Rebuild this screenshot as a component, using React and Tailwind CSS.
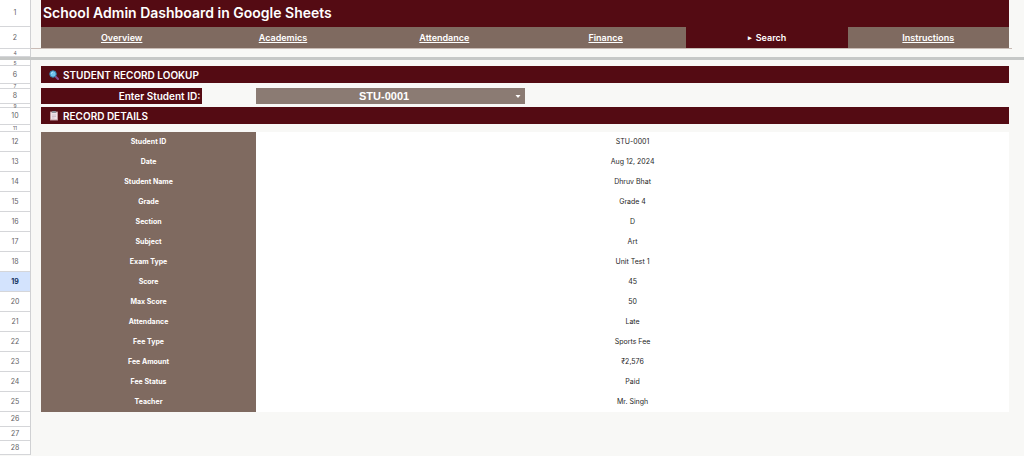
import React, { useState } from 'react';

const tabs = ['Overview', 'Academics', 'Attendance', 'Finance', 'Search', 'Instructions'];

const record = [
  { label: 'Student ID', value: 'STU-0001' },
  { label: 'Date', value: 'Aug 12, 2024' },
  { label: 'Student Name', value: 'Dhruv Bhat' },
  { label: 'Grade', value: 'Grade 4' },
  { label: 'Section', value: 'D' },
  { label: 'Subject', value: 'Art' },
  { label: 'Exam Type', value: 'Unit Test 1' },
  { label: 'Score', value: '45' },
  { label: 'Max Score', value: '50' },
  { label: 'Attendance', value: 'Late' },
  { label: 'Fee Type', value: 'Sports Fee' },
  { label: 'Fee Amount', value: '₹2,576' },
  { label: 'Fee Status', value: 'Paid' },
  { label: 'Teacher', value: 'Mr. Singh' },
];

const frozenRows = [
  { number: 1, height: 'h-[27px]' },
  { number: 2, height: 'h-[22px]' },
  { number: 4, height: 'h-[8px]', small: true },
];

// Spacer rows are only a few pixels tall, so their numbers are set smaller
const scrollRows = [
  { number: 5, height: 'h-[6px]', small: true },
  { number: 6, height: 'h-[18px]' },
  { number: 7, height: 'h-[5px]', small: true },
  { number: 8, height: 'h-[15px]' },
  { number: 9, height: 'h-[4px]', small: true },
  { number: 10, height: 'h-[17px]' },
  { number: 11, height: 'h-[7px]', small: true },
  ...record.map((_, i) => ({ number: 12 + i, height: 'h-[20px]' })),
  { number: 26, height: 'h-[15px]' },
  { number: 27, height: 'h-[14px]' },
  { number: 28, height: 'h-[14px]' },
];

const RowNumbers = ({ rows, selected }) => (
  <div className="w-[31px] shrink-0 bg-white border-r border-[#d0d1d3]">
    {rows.map((row) => (
      <div
        key={row.number}
        className={`${row.height} flex items-center justify-center border-b border-[#d5d6d9] ${
          row.small ? 'text-[5px] leading-[4px]' : 'text-[7px] leading-[8px]'
        } ${
          row.number === selected ? 'bg-[#d3e3fd] font-bold text-[#10305f]' : 'text-[#5f6164]'
        }`}
      >
        {row.number}
      </div>
    ))}
  </div>
);

const SearchIcon = () => (
  <svg viewBox="0 0 20 20" className="size-[10px]" aria-hidden="true">
    <path d="M13 13l5 5" stroke="#8b4f91" strokeWidth="4" strokeLinecap="round" />
    <circle cx="8" cy="8" r="6.5" fill="#71c4ed" stroke="#347da6" strokeWidth="2" />
    <path d="M4.5 7a4 4 0 013-3" stroke="#c4edff" strokeWidth="1.5" fill="none" strokeLinecap="round" />
  </svg>
);

const ClipboardIcon = () => (
  <svg viewBox="0 0 20 20" className="size-[10px]" aria-hidden="true">
    <rect x="2" y="1" width="16" height="18" rx="1" fill="#c09a9f" />
    <rect x="4" y="3" width="12" height="14" fill="#f0e2e8" />
    <rect x="6" y="0" width="8" height="4" rx="1" fill="#8d929b" />
    <path d="M6 8h8M6 11h8M6 14h5" stroke="#b5a3b0" strokeWidth="1" />
  </svg>
);

const SectionHeading = ({ icon, children }) => (
  <h2 className="h-[17px] flex items-center gap-1 pl-2 bg-[#540b13] text-[10px] leading-[12px] font-semibold text-white">
    {icon}
    {children}
  </h2>
);

const App = () => {
  const [studentId, setStudentId] = useState('STU-0001');

  return (
    <div className="min-h-screen bg-[#f8f8f6] font-['Inter','Noto_Sans',sans-serif]">
      {/* Frozen rows */}
      <header className="flex">
        <RowNumbers rows={frozenRows} />
        <div className="flex-1 min-w-0">
          <div className="mr-3 pl-[10px] pr-[3px] border-b border-[#c9bcb6]">
            <h1 className="h-[27px] flex items-center pl-[2px] pb-[2px] bg-[#540b13] text-[14px] leading-[18px] font-semibold text-white whitespace-nowrap">
              School Admin Dashboard in Google Sheets
            </h1>
            <nav className="h-[21px] grid grid-cols-6 text-[9px] leading-[12px] font-semibold text-white">
              {tabs.map((tab) => (
                <a
                  key={tab}
                  href={`#${tab.toLowerCase()}`}
                  aria-current={tab === 'Search' ? 'page' : undefined}
                  className={`flex items-center justify-center ${
                    tab === 'Search' ? 'gap-1 bg-[#540b13]' : 'bg-[#7f6a60] underline'
                  }`}
                >
                  {tab === 'Search' && <span className="text-[7px]">▸</span>}
                  {tab}
                </a>
              ))}
            </nav>
          </div>
        </div>
      </header>

      <div className="h-[3px] bg-[#c6c8c7]" />

      {/* Scrolling rows */}
      <div className="flex">
        <RowNumbers rows={scrollRows} selected={19} />
        <main className="flex-1 min-w-0 pt-[6px] pl-[10px] pr-[15px]">
          <SectionHeading icon={<SearchIcon />}>STUDENT RECORD LOOKUP</SectionHeading>

          <div className="mt-[5px] mb-[3px] grid grid-cols-18 h-[16px]">
            <label
              htmlFor="student-id"
              className="col-span-3 flex items-center justify-end pr-[2px] bg-[#540b13] text-[10px] leading-[12px] font-semibold text-white whitespace-nowrap"
            >
              Enter Student ID:
            </label>
            <div className="relative col-start-5 col-span-5">
              <select
                id="student-id"
                value={studentId}
                onChange={(e) => setStudentId(e.target.value)}
                className="block w-full h-[16px] pr-[13px] appearance-none bg-[#8b7b73] text-center font-['Liberation_Sans',Arial,sans-serif] text-[11px] leading-[16px] font-bold text-white"
              >
                <option>STU-0001</option>
              </select>
              <svg
                viewBox="0 0 6 3"
                className="absolute right-[4px] top-[7px] w-[6px] h-[3px] pointer-events-none"
                aria-hidden="true"
              >
                <path d="M0.5 0h5L3 3z" fill="#fff" />
              </svg>
            </div>
          </div>

          <SectionHeading icon={<ClipboardIcon />}>RECORD DETAILS</SectionHeading>

          <table className="mt-[8px] w-full table-fixed border-collapse text-center text-[7px] leading-[10px]">
            <colgroup>
              <col className="w-2/9" />
              <col />
            </colgroup>
            <tbody>
              {record.map((row) => (
                <tr key={row.label} className="h-[20px]">
                  <th scope="row" className="p-0 bg-[#7f6a60] font-bold text-white">
                    {row.label}
                  </th>
                  <td className="p-0 bg-white text-[#262626]">{row.value}</td>
                </tr>
              ))}
            </tbody>
          </table>
        </main>
      </div>
    </div>
  );
};

export default App;
